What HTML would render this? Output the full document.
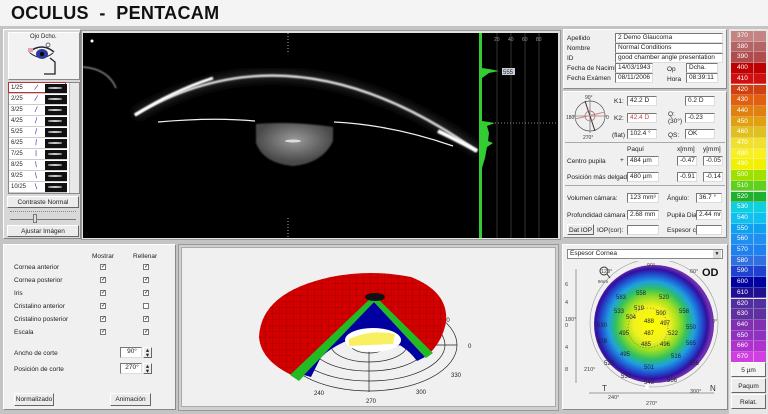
<!DOCTYPE html>
<html><head><meta charset="utf-8"><style>
*{box-sizing:border-box;margin:0;padding:0}
body{width:768px;height:414px;overflow:hidden;background:#c8c8c8;font-family:"Liberation Sans",sans-serif;font-size:6.5px;color:#222;position:relative}
.a{position:absolute}
.p{position:absolute;background:#f0f0f0;border:1px solid #fff;border-right-color:#888;border-bottom-color:#888}
.f{position:absolute;background:#fff;border:1px solid #777;border-right-color:#ddd;border-bottom-color:#ddd;height:10px;font-size:6.5px;padding-left:2px;line-height:8px;white-space:nowrap;overflow:hidden}
.btn{position:absolute;background:#ececec;border:1px solid #fff;border-right-color:#666;border-bottom-color:#666;text-align:center;font-size:6.5px;line-height:11px}
.cb{position:absolute;width:6px;height:6px;border:1px solid #777;background:#fff;font-size:6px;line-height:5px;text-align:center}
.sc{position:absolute;left:731px;width:35px;height:10.7px;font-size:6.5px;color:#fff;padding-left:6px;line-height:10.7px;border-bottom:1px solid rgba(255,255,255,.25)}
.sc i{position:absolute;left:22px;top:0;width:13px;height:100%;border-left:1px solid rgba(255,255,255,.4)}
.t{position:absolute;white-space:nowrap}
</style></head><body>
<div class="a" style="left:0;top:0;width:768px;height:26px;background:#f4f4f4"></div>
<div class="t" style="left:11px;top:3px;font-size:18px;font-weight:bold;color:#111;letter-spacing:0.3px">OCULUS &nbsp;- &nbsp;PENTACAM</div>
<div class="a" style="left:0;top:26px;width:768px;height:388px;background:#c4c4c4"></div>

<div class="p" style="left:3px;top:29px;width:78px;height:210px;background:#d8d8d8"></div>
<div class="p" style="left:8px;top:32px;width:72px;height:48px;background:#f2f2f2"></div>
<div class="t" style="left:30px;top:34px;font-size:6px">Ojo Dcho.</div>
<svg class="a" style="left:26px;top:40px" width="34" height="36"><path d="M3 12 Q16 2 28 12" stroke="#223" fill="none" stroke-width="1.5"/><path d="M4 13 Q16 22 27 13" stroke="#223" fill="none"/><ellipse cx="16" cy="14" rx="6" ry="5" fill="#2a3a9a"/><circle cx="16" cy="14" r="2" fill="#000"/><rect x="2" y="8" width="5" height="4" fill="#e6a0b0"/><circle cx="22" cy="5" r="2" fill="none" stroke="#333" stroke-width=".7"/><path d="M24 18 L29 22 L29 34 L18 34" stroke="#222" fill="none" stroke-width="1.3"/></svg>
<div class="a" style="left:8px;top:82px;width:72px;height:112px;background:#fff;border:1px solid #888"></div>
<div class="a" style="left:8px;top:82px;width:58px;height:11px;border:1.5px solid #b33"></div>
<div id="lst"></div>
<div class="a" style="left:69px;top:83px;width:10px;height:110px;background:#e8e8e8;border-left:1px solid #bbb"></div>
<div class="btn" style="left:7px;top:196px;width:72px;height:12px">Contraste Normal</div>
<div class="a" style="left:10px;top:211px;width:66px;height:2px;border-top:1px dotted #888"></div>
<div class="a" style="left:10px;top:219px;width:66px;height:1px;background:#777"></div>
<div class="a" style="left:33px;top:214px;width:4px;height:9px;background:#ddd;border:1px solid #777"></div>
<div class="btn" style="left:7px;top:225px;width:72px;height:12px">Ajustar Imágen</div>

<div class="a" style="left:81px;top:30px;width:480px;height:210px;background:#e0e0e0;border:1px solid #999"></div>
<svg class="a" style="left:83px;top:33px" width="396" height="205">
<defs><filter id="bl"><feGaussianBlur stdDeviation="0.8"/></filter><filter id="bl2"><feGaussianBlur stdDeviation="4"/></filter><radialGradient id="lg" cx=".5" cy=".4"><stop offset="0" stop-color="#9a9a9a"/><stop offset="1" stop-color="#4a4a4a"/></radialGradient></defs>
<rect width="396" height="205" fill="#000"/>
<circle cx="9" cy="8" r="1.5" fill="#fff"/>
<path d="M52 82 Q210 -12 396 118" stroke="#222" stroke-width="10" fill="none" filter="url(#bl2)"/>
<path d="M52 82 Q210 -12 394 118" stroke="#d8d8d8" stroke-width="2.5" fill="none" filter="url(#bl)"/>
<path d="M52 82 Q90 58 130 45" stroke="#fff" stroke-width="3" fill="none" filter="url(#bl)"/>
<path d="M355 98 Q380 110 394 118" stroke="#fff" stroke-width="4" fill="none" filter="url(#bl)"/>
<path d="M0 34 Q25 36 33 55" stroke="#888" stroke-width="1.5" fill="none" filter="url(#bl)"/>
<path d="M75 89 Q130 84 172 88" stroke="#eee" stroke-width="1.2" fill="none"/>
<path d="M251 89 Q310 92 370 113" stroke="#eee" stroke-width="1.2" fill="none"/>
<path d="M173 91 Q210 88 250 94 L250 108 Q240 130 210 133 Q180 130 173 110Z" fill="url(#lg)" filter="url(#bl)"/>
<ellipse cx="210" cy="108" rx="8" ry="1.5" fill="#ddd"/>
<line x1="205" y1="0" x2="205" y2="20" stroke="#aaa" stroke-dasharray="1 2"/>
<line x1="205" y1="185" x2="205" y2="205" stroke="#aaa" stroke-dasharray="1 2"/>
</svg>
<svg class="a" style="left:479px;top:33px" width="79" height="205">
<rect width="79" height="205" fill="#000"/>
<rect x="0" y="0" width="3" height="205" fill="#3c3"/>
<g stroke="#333"><line x1="18" y1="0" x2="18" y2="205"/><line x1="32" y1="0" x2="32" y2="205"/><line x1="46" y1="0" x2="46" y2="205"/><line x1="60" y1="0" x2="60" y2="205"/></g>
<g fill="#999" font-size="5" font-family="Liberation Sans"><text x="15" y="8">20</text><text x="29" y="8">40</text><text x="43" y="8">60</text><text x="57" y="8">80</text></g>
<path d="M3 35 L10 36 L20 38 L10 40 L3 45Z" fill="#3c3"/>
<path d="M3 88 L10 89 L16 90 L8 93 L10 100 L9 108 L14 110 L8 114 L6 125 L3 135Z" fill="#3c3"/>
<line x1="16" y1="90" x2="79" y2="90" stroke="#888" stroke-dasharray="1 2"/>
<rect x="23" y="35" width="13" height="7" fill="#ccd"/><text x="24" y="41" font-size="6" fill="#222" font-family="Liberation Sans">555</text>
</svg>

<div class="p" style="left:563px;top:29px;width:164px;height:60px"></div>
<div class="t" style="left:567px;top:35px">Apellido</div><div class="f" style="left:615px;top:33px;width:108px">2 Demo Glaucoma</div>
<div class="t" style="left:567px;top:45px">Nombre</div><div class="f" style="left:615px;top:43px;width:108px">Normal Conditions</div>
<div class="t" style="left:567px;top:55px">ID</div><div class="f" style="left:615px;top:53px;width:108px">good chamber angle presentation</div>
<div class="t" style="left:567px;top:65px">Fecha de Nacimie</div><div class="f" style="left:615px;top:63px;width:38px">14/03/1943</div>
<div class="t" style="left:667px;top:66px">Op</div><div class="f" style="left:686px;top:63px;width:32px">Dcha.</div>
<div class="t" style="left:567px;top:75px">Fecha Exámen</div><div class="f" style="left:615px;top:73px;width:38px">08/11/2006</div>
<div class="t" style="left:667px;top:76px">Hora</div><div class="f" style="left:686px;top:73px;width:32px">08:39:11</div>

<div class="p" style="left:563px;top:91px;width:164px;height:147px"></div>
<svg class="a" style="left:566px;top:93px" width="48" height="46"><circle cx="24" cy="23" r="15" fill="none" stroke="#555" stroke-width=".7"/><line x1="24" y1="6" x2="24" y2="40" stroke="#555" stroke-width=".6"/><line x1="7" y1="23" x2="41" y2="23" stroke="#555" stroke-width=".6"/><line x1="19" y1="8" x2="29" y2="38" stroke="#333" stroke-width="1"/><line x1="9" y1="26" x2="39" y2="19" stroke="#c88" stroke-width="1"/><circle cx="24" cy="23" r="5" fill="none" stroke="#a66" stroke-width=".7"/><g font-size="5" fill="#333" font-family="Liberation Sans"><text x="19" y="6">90°</text><text x="17" y="46">270°</text><text x="0" y="26">180</text><text x="40" y="26">0</text></g></svg>
<div class="t" style="left:614px;top:98px">K1:</div><div class="f" style="left:627px;top:96px;width:30px">42.2 D</div><div class="f" style="left:685px;top:96px;width:30px">0.2 D</div>
<div class="t" style="left:614px;top:115px">K2:</div><div class="f" style="left:627px;top:113px;width:30px;color:#b44">42.4 D</div>
<div class="t" style="left:668px;top:111px">Q:<br>(30°)</div><div class="f" style="left:685px;top:113px;width:30px">-0.23</div>
<div class="t" style="left:612px;top:132px">(flat)</div><div class="f" style="left:627px;top:129px;width:30px">102.4 °</div>
<div class="t" style="left:668px;top:132px">QS:</div><div class="f" style="left:685px;top:129px;width:30px">OK</div>
<div class="a" style="left:565px;top:142px;width:160px;height:1px;background:#aaa"></div>
<div class="t" style="left:627px;top:146px">Paquí</div><div class="t" style="left:677px;top:146px">x[mm]</div><div class="t" style="left:703px;top:146px">y[mm]</div>
<div class="t" style="left:567px;top:158px">Centro pupila</div><div class="t" style="left:620px;top:157px">+</div><div class="f" style="left:627px;top:156px;width:32px">484 µm</div><div class="f" style="left:677px;top:156px;width:20px">-0.47</div><div class="f" style="left:703px;top:156px;width:20px">-0.05</div>
<div class="t" style="left:567px;top:174px">Posición más delgada</div><div class="f" style="left:627px;top:172px;width:32px">480 µm</div><div class="f" style="left:677px;top:172px;width:20px">-0.91</div><div class="f" style="left:703px;top:172px;width:20px">-0.14</div>
<div class="a" style="left:565px;top:185px;width:160px;height:1px;background:#aaa"></div>
<div class="t" style="left:567px;top:195px">Volumen cámara:</div><div class="f" style="left:627px;top:193px;width:32px">123 mm³</div><div class="t" style="left:667px;top:195px">Ángulo:</div><div class="f" style="left:696px;top:193px;width:26px">36.7 °</div>
<div class="t" style="left:567px;top:212px">Profundidad cámara ant</div><div class="f" style="left:627px;top:210px;width:32px">2.68 mm</div><div class="t" style="left:667px;top:212px">Pupila Dia</div><div class="f" style="left:696px;top:210px;width:26px">2.44 mm</div>
<div class="btn" style="left:567px;top:224px;width:27px;height:11px">Dat IOP</div><div class="t" style="left:597px;top:227px">IOP(cor):</div><div class="f" style="left:627px;top:225px;width:32px"></div><div class="t" style="left:667px;top:227px">Espesor c</div><div class="f" style="left:696px;top:225px;width:26px"></div>

<div class="a" style="left:729px;top:29px;width:39px;height:385px;background:#e6e6e6"></div>
<div id="scale"></div>
<div class="btn" style="left:731px;top:362px;width:35px;height:15px;line-height:15px;background:#f4f4f4">5 µm</div>
<div class="btn" style="left:731px;top:378px;width:35px;height:15px;line-height:15px">Paqum</div>
<div class="btn" style="left:731px;top:394px;width:35px;height:15px;line-height:15px">Relat.</div>

<div class="p" style="left:3px;top:244px;width:173px;height:166px"></div>
<div class="t" style="left:92px;top:253px">Mostrar</div><div class="t" style="left:133px;top:253px">Rellenar</div>
<div id="chk"></div>
<div class="t" style="left:14px;top:350px">Ancho de corte</div><div class="f" style="left:120px;top:347px;width:22px;height:11px;text-align:center">90°</div>
<div class="t" style="left:14px;top:366px">Posición de corte</div><div class="f" style="left:120px;top:363px;width:22px;height:11px;text-align:center">270°</div>
<div class="btn" style="left:143px;top:347px;width:9px;height:11px;line-height:5px">▴<br>▾</div>
<div class="btn" style="left:143px;top:363px;width:9px;height:11px;line-height:5px">▴<br>▾</div>
<div class="btn" style="left:14px;top:393px;width:40px;height:13px">Normalizado</div>
<div class="btn" style="left:110px;top:393px;width:41px;height:13px">Animación</div>

<div class="a" style="left:178px;top:244px;width:381px;height:167px;background:#d0d0d0;border:1px solid #999"></div>
<div class="a" style="left:181px;top:247px;width:375px;height:160px;background:#f0f0f0;border:1px solid #aaa"></div>
<svg class="a" style="left:181px;top:247px" width="375" height="160">
<defs><pattern id="gr" width="7" height="6" patternUnits="userSpaceOnUse"><path d="M7 0L0 0 0 6" fill="none" stroke="#700" stroke-width=".5"/></pattern></defs>
<g stroke="#222" fill="none" stroke-width=".7">
<ellipse cx="188" cy="98" rx="18" ry="8"/><ellipse cx="188" cy="98" rx="38" ry="17"/><ellipse cx="188" cy="98" rx="58" ry="26"/><ellipse cx="188" cy="98" rx="76" ry="36"/><ellipse cx="188" cy="98" rx="88" ry="46"/>
<line x1="188" y1="98" x2="188" y2="145"/><line x1="188" y1="98" x2="276" y2="98"/>
</g>
<g font-size="6" fill="#222" font-family="Liberation Sans"><text x="262" y="75">30</text><text x="287" y="101">0</text><text x="270" y="130">330</text><text x="235" y="147">300</text><text x="133" y="148">240</text><text x="185" y="156">270</text></g>
<path d="M115 130 Q80 115 78 90 Q80 45 150 30 Q190 22 230 30 Q268 45 265 75 Q262 92 250 105 L194 50 Z" fill="#d40000"/>
<path d="M115 130 Q80 115 78 90 Q80 45 150 30 Q190 22 230 30 Q268 45 265 75 Q262 92 250 105 L194 50 Z" fill="url(#gr)"/>
<path d="M109 128 L193 48 L252 106 L245 111 L193 55 L118 134Z" fill="#22bb22"/>
<path d="M123 128 L193 55 L244 110 L236 114 Q220 92 188 88 Q160 92 140 110 L130 130Z" fill="#0000a0"/>
<ellipse cx="192" cy="93" rx="28" ry="12" fill="#fff"/>
<path d="M168 92 Q190 82 214 87 L212 97 L168 99Z" fill="#f8f060"/>
<ellipse cx="194" cy="50" rx="10" ry="4" fill="#111"/>
</svg>

<div class="p" style="left:562px;top:244px;width:166px;height:166px"></div>
<div class="a" style="left:567px;top:249px;width:156px;height:10px;background:#fff;border:1px solid #888;font-size:6.5px;line-height:8px;padding-left:2px">Espesor Cornea<span style="position:absolute;right:1px;top:0;width:8px;height:8px;background:#ddd;font-size:5px;text-align:center">▼</span></div>
<svg class="a" style="left:564px;top:261px" width="162" height="148">
<defs><radialGradient id="mg" cx=".48" cy=".5" r=".5"><stop offset="0" stop-color="#ffff00"/><stop offset=".3" stop-color="#f0f020"/><stop offset=".45" stop-color="#a0e020"/><stop offset=".6" stop-color="#30c060"/><stop offset=".72" stop-color="#20a0e0"/><stop offset=".84" stop-color="#2050d0"/><stop offset=".93" stop-color="#3010a0"/><stop offset="1" stop-color="#7030b0"/></radialGradient></defs>
<ellipse cx="90" cy="63" rx="60" ry="59" fill="url(#mg)"/>
<circle cx="90" cy="62" r="64" fill="none" stroke="#999" stroke-width=".6"/>
<g stroke="#444" stroke-width=".5"><line x1="12" y1="8" x2="12" y2="122"/><line x1="25" y1="132" x2="150" y2="132"/></g>
<circle cx="84" cy="67" r="20" fill="none" stroke="#555" stroke-dasharray="1 2" stroke-width=".6"/>
<g font-size="6" fill="#223" font-family="Liberation Sans">
<text x="52" y="38">583</text><text x="72" y="34">558</text><text x="95" y="38">520</text>
<text x="50" y="52">533</text><text x="70" y="49">519</text><text x="92" y="54">500</text><text x="115" y="52">558</text>
<text x="62" y="58">504</text><text x="33" y="66">530</text><text x="80" y="62">488</text><text x="96" y="64">497</text><text x="122" y="68">550</text>
<text x="55" y="74">495</text><text x="80" y="74">487</text><text x="104" y="74">522</text>
<text x="33" y="82">528</text><text x="77" y="85">485</text><text x="96" y="85">496</text><text x="122" y="84">565</text>
<text x="56" y="95">495</text><text x="107" y="97">516</text>
<text x="40" y="104">529</text><text x="80" y="108">501</text><text x="125" y="104">556</text>
<text x="57" y="117">530</text><text x="80" y="123">543</text><text x="103" y="121">556</text>
</g>
<circle cx="83" cy="126" r="2" fill="#fff"/>
<g font-size="5.5" fill="#444" font-family="Liberation Sans"><text x="83" y="6">90°</text><text x="37" y="12">120°</text><text x="126" y="12">60°</text><text x="148" y="62">0°</text><text x="1" y="60">180°</text><text x="20" y="110">210°</text><text x="44" y="138">240°</text><text x="82" y="144">270°</text><text x="126" y="132">300°</text>
<text x="1" y="25">6</text><text x="1" y="43">4</text><text x="1" y="66">0</text><text x="1" y="88">4</text><text x="1" y="110">8</text></g>
<text x="138" y="15" font-size="11" font-weight="bold" fill="#111" font-family="Liberation Sans">OD</text>
<text x="38" y="130" font-size="8" fill="#333" font-family="Liberation Sans">T</text><text x="146" y="130" font-size="8" fill="#333" font-family="Liberation Sans">N</text>
<circle cx="40" cy="10" r="4" fill="none" stroke="#333"/><line x1="43" y1="13" x2="46" y2="17" stroke="#333"/><text x="34" y="22" font-size="4.5" fill="#333" font-family="Liberation Sans">9mm</text>
</svg>

<script>
var l='';
for(var i=0;i<10;i++){var y=83+i*11;l+='<div class="t" style="left:11px;top:'+(y+2)+'px;font-size:6px">'+(i+1)+'/25</div><div class="t" style="left:35px;top:'+y+'px;color:#33a;font-size:8px;transform:rotate('+(20-i*6)+'deg)">/</div><div class="a" style="left:45px;top:'+(y+1)+'px;width:22px;height:9px;background:#111"><div class="a" style="left:3px;top:3px;width:14px;height:1.5px;background:#ccc;border-radius:50%"></div></div><div class="a" style="left:9px;top:'+(y+10)+'px;width:58px;height:1px;background:#ccc"></div>';}
document.getElementById('lst').innerHTML=l;
var c=['#c48484','#b46464','#b04c4c','#c00000','#d01010','#d04010','#e06010','#e08010','#e0a010','#e0c020','#f0e030','#f8f020','#f0f000','#a0e000','#60d020','#20b030','#10d0e0','#10c0f0','#10a0f0','#2090f0','#2080f0','#3070e0','#2040d0','#0000a0','#201090','#5030a0','#6030a0','#8030b0','#9030c0','#b030d0','#d040e0'];
var s='';for(var i=0;i<31;i++){s+='<div class="sc" style="top:'+(31+i*10.7)+'px;background:'+c[i]+'">'+(370+i*10)+'<i></i></div>';}
document.getElementById('scale').innerHTML=s;
var n=['Cornea anterior','Cornea posterior','Iris','Cristalino anterior','Cristalino posterior','Escala'];var h='';
for(var i=0;i<6;i++){var y=264+i*13;h+='<div class="t" style="left:14px;top:'+y+'px">'+n[i]+'</div><div class="cb" style="left:100px;top:'+y+'px">✓</div><div class="cb" style="left:143px;top:'+y+'px">'+(i==3?'':'✓')+'</div>';}
document.getElementById('chk').innerHTML=h;
</script>
</body></html>
